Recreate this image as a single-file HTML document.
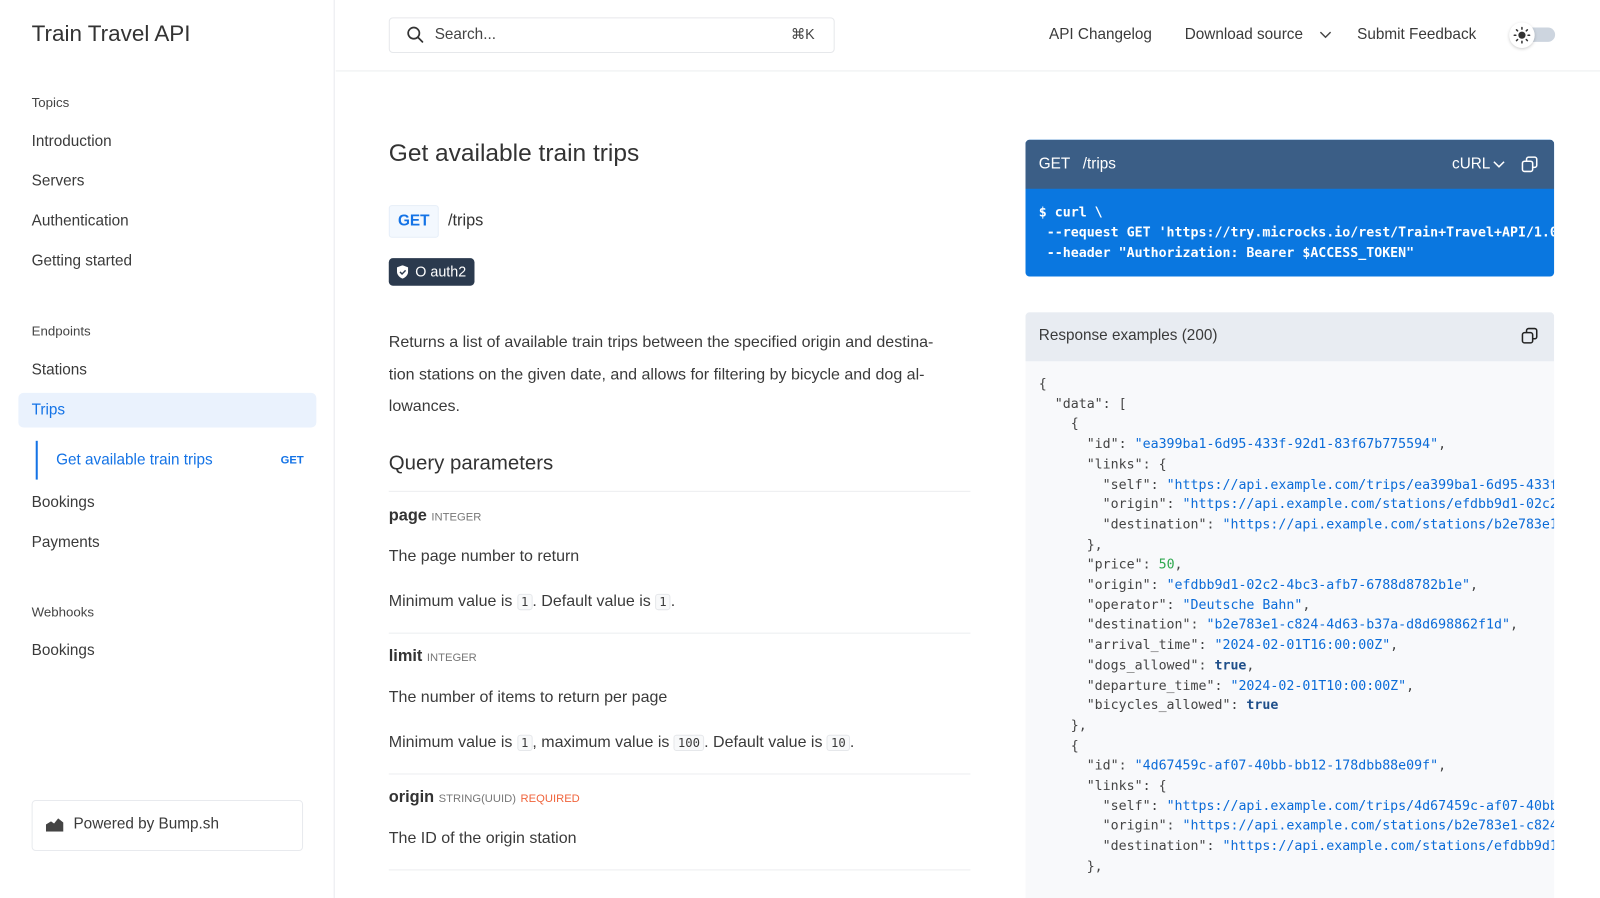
<!DOCTYPE html>
<html><head><meta charset="utf-8"><style>
*{box-sizing:border-box;margin:0;padding:0}
body{width:1600px;height:880px;overflow:hidden;background:#fff;font-family:"Liberation Sans",sans-serif;color:#333;position:relative}
#w{position:absolute;left:0;top:0;width:1568px;height:863px;transform:scale(1.020408);transform-origin:0 0}
.a{position:absolute;white-space:nowrap}
.side{position:absolute;left:0;top:0;width:328px;height:880px;border-right:1px solid #e8eaee}
.nav{font-size:15px;color:#3a3a3a}
.cat{font-size:13px;color:#444}
.mono{font-family:"DejaVu Sans Mono","Liberation Mono",monospace}
.code{background:#f8f9fa;border:1px solid #e6e8eb;border-radius:3px;font-size:12px;padding:0 3px;font-family:"DejaVu Sans Mono",monospace}
.p{font-size:15.7px;color:#3a3a3a}
.hr{position:absolute;left:381px;width:570px;height:1px;background:#eceef0}
.j{position:absolute;left:1018px;font-family:"DejaVu Sans Mono",monospace;font-size:13px;color:#444;white-space:pre;line-height:19.7px}
.s{color:#0a6bd8}.n{color:#2fa84f}.b{color:#1f4f8a;font-weight:bold}
</style></head><body><div id="w">
<div class="side"></div>
<div class="a" style="left:31px;top:20px;font-size:22px;color:#333">Train Travel API</div>
<div class="a cat" style="left:31px;top:93px">Topics</div>
<div class="a nav" style="left:31px;top:130px">Introduction</div>
<div class="a nav" style="left:31px;top:169px">Servers</div>
<div class="a nav" style="left:31px;top:208px">Authentication</div>
<div class="a nav" style="left:31px;top:247px">Getting started</div>
<div class="a cat" style="left:31px;top:317px">Endpoints</div>
<div class="a nav" style="left:31px;top:354px">Stations</div>
<div class="a" style="left:18px;top:385px;width:292px;height:34px;background:#eaf2fd;border-radius:5px"></div>
<div class="a nav" style="left:31px;top:393px;color:#1473e6">Trips</div>
<div class="a" style="left:35px;top:432px;width:2px;height:38px;background:#1473e6"></div>
<div class="a nav" style="left:55px;top:442px;color:#1473e6">Get available train trips</div>
<div class="a" style="left:275px;top:445px;font-size:11px;font-weight:bold;color:#1473e6">GET</div>
<div class="a nav" style="left:31px;top:484px">Bookings</div>
<div class="a nav" style="left:31px;top:523px">Payments</div>
<div class="a cat" style="left:31px;top:592px">Webhooks</div>
<div class="a nav" style="left:31px;top:629px">Bookings</div>
<div class="a" style="left:31px;top:784px;width:266px;height:50px;border:1px solid #e8eaee;border-radius:4px"></div>
<svg class="a" style="left:45px;top:801px" width="18" height="14" viewBox="0 0 18 14"><path d="M0 14V7l5-3 3 2 4-5 5 4v9z" fill="#444"/></svg>
<div class="a" style="left:72px;top:799px;font-size:15px;color:#3a3a3a">Powered by Bump.sh</div>

<div class="a" style="left:329px;top:69px;width:1271px;height:1px;background:#eceef0"></div>
<div class="a" style="left:381px;top:17px;width:437px;height:35px;border:1px solid #e6e8eb;border-radius:4px"></div>
<svg class="a" style="left:398px;top:25px" width="18" height="18" viewBox="0 0 18 18"><circle cx="7.5" cy="7.5" r="5.5" fill="none" stroke="#333" stroke-width="1.7"/><path d="M11.5 11.5L16 16" stroke="#333" stroke-width="1.7" stroke-linecap="round"/></svg>
<div class="a" style="left:426px;top:25px;font-size:15px;color:#444">Search...</div>
<div class="a" style="left:775px;top:25px;font-size:14px;color:#444">⌘K</div>
<div class="a" style="left:1028px;top:25px;font-size:15px;color:#3a3a3a">API Changelog</div>
<div class="a" style="left:1161px;top:25px;font-size:15px;color:#3a3a3a">Download source</div>
<svg class="a" style="left:1293px;top:30px" width="12" height="8" viewBox="0 0 12 8"><path d="M1 1.5l5 5 5-5" fill="none" stroke="#444" stroke-width="1.4"/></svg>
<div class="a" style="left:1330px;top:25px;font-size:15px;color:#3a3a3a">Submit Feedback</div>
<div class="a" style="left:1488px;top:27px;width:36px;height:14px;background:#cdd5df;border-radius:7px"></div>
<div class="a" style="left:1479px;top:22px;width:25px;height:25px;background:#fff;border-radius:50%;box-shadow:0 1px 3px rgba(0,0,0,.2)"></div>
<svg class="a" style="left:1483px;top:26px" width="17" height="17" viewBox="0 0 17 17"><circle cx="8.5" cy="8.5" r="3.5" fill="#333"/><g stroke="#333" stroke-width="1.5" stroke-linecap="round"><path d="M8.5 1v1.5M8.5 14.5V16M1 8.5h1.5M14.5 8.5H16M3.2 3.2l1 1M12.8 12.8l1 1M3.2 13.8l1-1M12.8 4.2l1-1"/></g></svg>

<div class="a" style="left:381px;top:137px;font-size:24px;color:#333">Get available train trips</div>
<div class="a" style="left:381px;top:201px;width:49px;height:32px;background:#f3f8fe;border:1px solid #e6eef8;border-radius:3px"></div>
<div class="a" style="left:390px;top:208px;font-size:15px;font-weight:bold;color:#1473e6">GET</div>
<div class="a" style="left:439px;top:208px;font-size:16px;color:#333">/trips</div>
<div class="a" style="left:381px;top:253px;width:84px;height:27px;background:#2b3a4e;border-radius:4px"></div>
<svg class="a" style="left:389px;top:260px" width="11" height="13" viewBox="0 0 11 13"><path d="M5.5 0L11 2v4c0 3.5-2.5 6-5.5 7C2.5 12 0 9.5 0 6V2z" fill="#fff"/><path d="M3 6.5l2 2 3.5-3.5" stroke="#2b3a4e" stroke-width="1.4" fill="none"/></svg>
<div class="a" style="left:407px;top:258px;font-size:14px;color:#fff">O auth2</div>
<div class="a p" style="left:381px;top:320px;line-height:31.5px;white-space:normal;width:580px">Returns a list of available train trips between the specified origin and destina-<br>tion stations on the given date, and allows for filtering by bicycle and dog al-<br>lowances.</div>
<div class="a" style="left:381px;top:443px;font-size:20px;color:#333">Query parameters</div>
<div class="hr" style="top:481px"></div>
<div class="a" style="left:381px;top:497px;font-size:16px;font-weight:bold;color:#333">page <span style="font-size:11px;font-weight:normal;color:#777">INTEGER</span></div>
<div class="a p" style="left:381px;top:537px">The page number to return</div>
<div class="a p" style="left:381px;top:581px">Minimum value is <span class="code">1</span>. Default value is <span class="code">1</span>.</div>
<div class="hr" style="top:620px"></div>
<div class="a" style="left:381px;top:635px;font-size:16px;font-weight:bold;color:#333">limit <span style="font-size:11px;font-weight:normal;color:#777">INTEGER</span></div>
<div class="a p" style="left:381px;top:675px">The number of items to return per page</div>
<div class="a p" style="left:381px;top:719px">Minimum value is <span class="code">1</span>, maximum value is <span class="code">100</span>. Default value is <span class="code">10</span>.</div>
<div class="hr" style="top:758px"></div>
<div class="a" style="left:381px;top:773px;font-size:16px;font-weight:bold;color:#333">origin <span style="font-size:11px;font-weight:normal;color:#777">STRING(UUID)</span> <span style="font-size:11px;font-weight:normal;color:#f0643c">REQUIRED</span></div>
<div class="a p" style="left:381px;top:813px">The ID of the origin station</div>
<div class="hr" style="top:852px"></div>

<div class="a" style="left:1005px;top:137px;width:518px;height:134px;background:#0a77e0;border-radius:4px;overflow:hidden">
<div style="height:48px;background:#3b5e86"></div></div>
<div class="a" style="left:1018px;top:152px;font-size:15px;color:#fff">GET &nbsp; /trips</div>
<div class="a" style="left:1423px;top:152px;font-size:15px;color:#fff">cURL</div>
<svg class="a" style="left:1463px;top:157px" width="12" height="8" viewBox="0 0 12 8"><path d="M1 1.5l5 5 5-5" fill="none" stroke="#fff" stroke-width="1.5"/></svg>
<svg class="a" style="left:1491px;top:153px" width="16" height="16" viewBox="0 0 16 16"><rect x="1" y="5" width="10" height="10" rx="2" fill="none" stroke="#fff" stroke-width="1.5"/><path d="M5 5V3a2 2 0 012-2h6a2 2 0 012 2v6a2 2 0 01-2 2h-2" fill="none" stroke="#fff" stroke-width="1.5"/></svg>
<div class="a mono" style="left:1018px;top:199px;width:505px;overflow:hidden;font-size:13px;font-weight:bold;color:#fff;line-height:20px;white-space:pre">$ curl \
 --request GET 'https://try.microcks.io/rest/Train+Travel+API/1.0.0/trips' \
 --header "Authorization: Bearer $ACCESS_TOKEN"</div>

<div class="a" style="left:1005px;top:306px;width:518px;height:574px;background:#f8f9fb;border-radius:4px 4px 0 0;overflow:hidden"><div style="height:48px;background:#e8ecf2"></div></div>
<div class="a" style="left:1018px;top:320px;font-size:15px;color:#3a3a3a">Response examples (200)</div>
<svg class="a" style="left:1491px;top:321px" width="16" height="16" viewBox="0 0 16 16"><rect x="1" y="5" width="10" height="10" rx="2" fill="none" stroke="#222" stroke-width="1.5"/><path d="M5 5V3a2 2 0 012-2h6a2 2 0 012 2v6a2 2 0 01-2 2h-2" fill="none" stroke="#222" stroke-width="1.5"/></svg>
<div class="a" style="left:1005px;top:366px;width:518px;height:514px;overflow:hidden">
<div class="j" style="left:13px;top:1px">{
  "data": [
    {
      "id": <span class="s">"ea399ba1-6d95-433f-92d1-83f67b775594"</span>,
      "links": {
        "self": <span class="s">"https://api.example.com/trips/ea399ba1-6d95-433f-92d1-83f67b775594"</span>
        "origin": <span class="s">"https://api.example.com/stations/efdbb9d1-02c2-4bc3-afb7-6788d8782b1e"</span>
        "destination": <span class="s">"https://api.example.com/stations/b2e783e1-c824-4d63-b37a-d8d698862f1d"</span>
      },
      "price": <span class="n">50</span>,
      "origin": <span class="s">"efdbb9d1-02c2-4bc3-afb7-6788d8782b1e"</span>,
      "operator": <span class="s">"Deutsche Bahn"</span>,
      "destination": <span class="s">"b2e783e1-c824-4d63-b37a-d8d698862f1d"</span>,
      "arrival_time": <span class="s">"2024-02-01T16:00:00Z"</span>,
      "dogs_allowed": <span class="b">true</span>,
      "departure_time": <span class="s">"2024-02-01T10:00:00Z"</span>,
      "bicycles_allowed": <span class="b">true</span>
    },
    {
      "id": <span class="s">"4d67459c-af07-40bb-bb12-178dbb88e09f"</span>,
      "links": {
        "self": <span class="s">"https://api.example.com/trips/4d67459c-af07-40bb-bb12-178dbb88e09f"</span>
        "origin": <span class="s">"https://api.example.com/stations/b2e783e1-c824-4d63-b37a-d8d698862f1d"</span>
        "destination": <span class="s">"https://api.example.com/stations/efdbb9d1-02c2-4bc3-afb7-6788d8782b1e"</span>
      },
</div></div>
</div></body></html>
